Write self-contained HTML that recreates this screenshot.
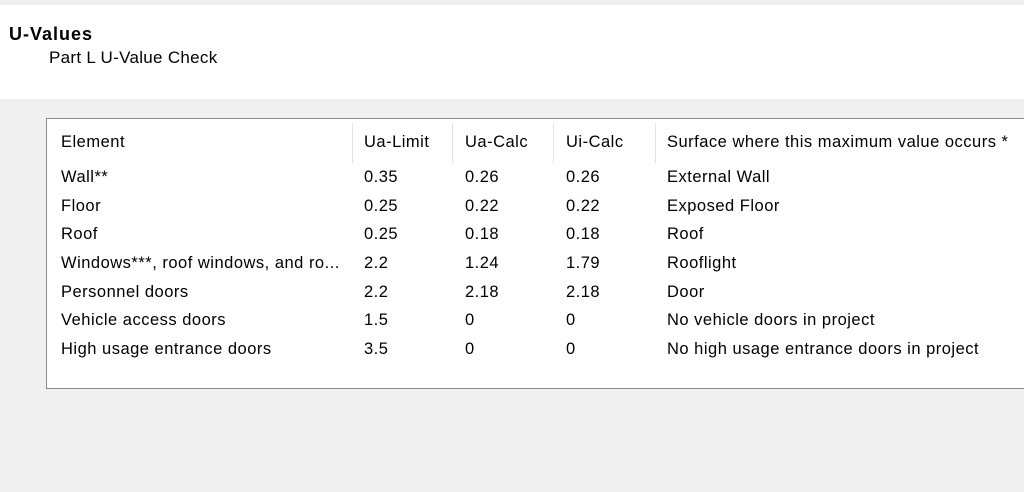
<html><head><style>
body{margin:0;width:1024px;height:492px;background:#f0f0f0;font-family:"Liberation Sans",sans-serif;color:#000;position:relative;overflow:hidden}
.hdr{position:absolute;left:0;top:5px;width:1024px;height:94px;background:#fff}
.t1{position:absolute;left:9px;top:19px;font-weight:bold;font-size:18px;letter-spacing:1px}
.t2{position:absolute;left:49px;top:43px;font-size:17px;letter-spacing:0.3px}
.box{position:absolute;left:46px;top:118px;width:990px;height:269px;background:#fff;border:1px solid #888}
.c{position:absolute;font-size:16.5px;white-space:nowrap;letter-spacing:0.5px}
.d{position:absolute;top:4px;width:1px;height:40px;background:#e3e3e3}
</style></head><body>
<div class="hdr"><div class="t1">U-Values</div><div class="t2">Part L U-Value Check</div></div>
<div class="box">
<div class="d" style="left:305px"></div><div class="d" style="left:405px"></div><div class="d" style="left:506px"></div><div class="d" style="left:608px"></div>
<div class="c" style="left:14px;top:14px">Element</div><div class="c" style="left:317px;top:14px">Ua-Limit</div><div class="c" style="left:418px;top:14px">Ua-Calc</div><div class="c" style="left:519px;top:14px">Ui-Calc</div><div class="c" style="left:620px;top:14px">Surface where this maximum value occurs *</div>
<div class="c" style="left:14px;top:49px">Wall**</div><div class="c" style="left:317px;top:49px">0.35</div><div class="c" style="left:418px;top:49px">0.26</div><div class="c" style="left:519px;top:49px">0.26</div><div class="c" style="left:620px;top:49px">External Wall</div>
<div class="c" style="left:14px;top:78px">Floor</div><div class="c" style="left:317px;top:78px">0.25</div><div class="c" style="left:418px;top:78px">0.22</div><div class="c" style="left:519px;top:78px">0.22</div><div class="c" style="left:620px;top:78px">Exposed Floor</div>
<div class="c" style="left:14px;top:106px">Roof</div><div class="c" style="left:317px;top:106px">0.25</div><div class="c" style="left:418px;top:106px">0.18</div><div class="c" style="left:519px;top:106px">0.18</div><div class="c" style="left:620px;top:106px">Roof</div>
<div class="c" style="left:14px;top:135px">Windows***, roof windows, and ro...</div><div class="c" style="left:317px;top:135px">2.2</div><div class="c" style="left:418px;top:135px">1.24</div><div class="c" style="left:519px;top:135px">1.79</div><div class="c" style="left:620px;top:135px">Rooflight</div>
<div class="c" style="left:14px;top:164px">Personnel doors</div><div class="c" style="left:317px;top:164px">2.2</div><div class="c" style="left:418px;top:164px">2.18</div><div class="c" style="left:519px;top:164px">2.18</div><div class="c" style="left:620px;top:164px">Door</div>
<div class="c" style="left:14px;top:192px">Vehicle access doors</div><div class="c" style="left:317px;top:192px">1.5</div><div class="c" style="left:418px;top:192px">0</div><div class="c" style="left:519px;top:192px">0</div><div class="c" style="left:620px;top:192px">No vehicle doors in project</div>
<div class="c" style="left:14px;top:221px">High usage entrance doors</div><div class="c" style="left:317px;top:221px">3.5</div><div class="c" style="left:418px;top:221px">0</div><div class="c" style="left:519px;top:221px">0</div><div class="c" style="left:620px;top:221px">No high usage entrance doors in project</div>
</div>
</body></html>
